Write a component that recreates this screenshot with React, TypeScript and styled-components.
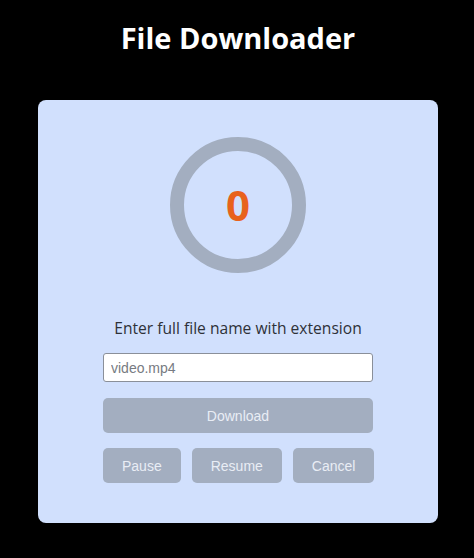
import styled, { createGlobalStyle } from 'styled-components'

const GlobalStyle = createGlobalStyle`
  html, body {
    margin: 0;
    padding: 0;
    background: #000;
  }
  * {
    box-sizing: border-box;
  }
`

const Page = styled.div`
  width: 474px;
  min-height: 558px;
  padding-left: 2px;
  background: #000;
  display: flex;
  flex-direction: column;
  align-items: center;
`

const Title = styled.h1`
  margin: 0;
  padding-top: 18px;
  height: 100px;
  line-height: 40px;
  font-family: 'Open Sans', 'Liberation Sans', sans-serif;
  font-weight: 700;
  font-size: 29px;
  color: #fff;
  text-align: center;
`

const Card = styled.div`
  width: 400px;
  height: 423px;
  background: #d1e0fd;
  border-radius: 8px;
  padding: 37px 65px 40px;
  display: flex;
  flex-direction: column;
  align-items: center;
`

const Ring = styled.div`
  width: 136px;
  height: 136px;
  border-radius: 50%;
  border: 14px solid #a3aec0;
  display: flex;
  align-items: center;
  justify-content: center;
`

const Percent = styled.span`
  font-family: 'Open Sans', 'Liberation Sans', sans-serif;
  font-weight: 700;
  font-size: 42px;
  color: #e8621c;
  line-height: 1;
`

const Label = styled.p`
  margin: 45px 0 0;
  font-family: 'Open Sans', 'Liberation Sans', sans-serif;
  font-size: 15.6px;
  line-height: 20px;
  color: #2e3138;
`

const Input = styled.input`
  margin-top: 15px;
  width: 100%;
  height: 29px;
  padding: 0 7px;
  border: 1px solid #8a8f99;
  border-radius: 3px;
  background: #fff;
  font-family: 'Liberation Sans', Arial, sans-serif;
  font-size: 14px;
  color: #333;
  outline: none;

  &::placeholder {
    color: #777b82;
  }
`

const Button = styled.button<{ $wide?: boolean }>`
  height: 35px;
  padding: 0 19px;
  width: ${(p) => (p.$wide ? '100%' : 'auto')};
  border: none;
  border-radius: 5px;
  background: #a3aec0;
  color: #e9edf5;
  font-family: 'Liberation Sans', Arial, sans-serif;
  font-size: 14px;
  cursor: pointer;
`

const DownloadArea = styled.div`
  margin-top: 16px;
  width: 100%;
`

const Controls = styled.div`
  margin-top: 15px;
  width: 100%;
  display: flex;
  gap: 11px;
`

export default function App() {
  return (
    <>
      <GlobalStyle />
      <Page>
        <Title>File Downloader</Title>
        <Card>
          <Ring>
            <Percent>0</Percent>
          </Ring>
          <Label>Enter full file name with extension</Label>
          <Input placeholder="video.mp4" />
          <DownloadArea>
            <Button $wide>Download</Button>
          </DownloadArea>
          <Controls>
            <Button>Pause</Button>
            <Button>Resume</Button>
            <Button>Cancel</Button>
          </Controls>
        </Card>
      </Page>
    </>
  )
}
